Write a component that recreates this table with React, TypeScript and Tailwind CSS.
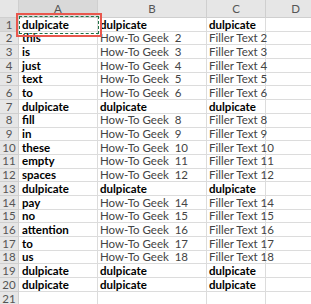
import React from "react";

const rowsA = ["dulpicate","this","is","just","text","to","dulpicate","fill","in","these","empty","spaces","dulpicate","pay","no","attention","to","us","dulpicate","dulpicate"];
const dupRows = new Set([1,7,13,19,20]);

export default function App() {
  const rows = rowsA.map((a, i) => {
    const n = i + 1;
    const dup = dupRows.has(n);
    return { n, a, b: dup ? "dulpicate" : `How-To Geek\u00a0 ${n}`, c: dup ? "dulpicate" : `Filler Text ${n}`, dup };
  });
  return (
    <div className="relative w-[311px] h-[304px] overflow-hidden bg-white text-[11.5px] text-[#262626]" style={{ fontFamily: "Lato, 'Liberation Sans', sans-serif" }}>
      <div className="grid grid-cols-[19px_79px_109px_59px_60px]">
        <div className="h-[18px] bg-[#e6e6e6] border-r border-b border-[#cfcfcf]" />
        <div className="h-[18px] bg-[#d9d9d9] border-r border-b border-[#cfcfcf] flex items-center justify-center text-[#555]">A</div>
        <div className="h-[18px] bg-[#e6e6e6] border-r border-b border-[#cfcfcf] flex items-center justify-center text-[#555]">B</div>
        <div className="h-[18px] bg-[#e6e6e6] border-r border-b border-[#cfcfcf] flex items-center justify-center text-[#555]">C</div>
        <div className="h-[18px] bg-[#e6e6e6] border-r border-b border-[#cfcfcf] flex items-center justify-center text-[#555]">D</div>
        {rows.map((r) => (
          <React.Fragment key={r.n}>
            <div className={`h-[13.7px] ${r.n === 1 ? "bg-[#d9d9d9]" : "bg-[#e6e6e6]"} border-r border-b border-[#cfcfcf] flex items-center justify-center text-[#555] leading-none`}>{r.n}</div>
            <div className="h-[13.7px] border-r border-b border-[#dcdcdc] flex items-center pl-[3px] font-bold text-black leading-none">{r.a}</div>
            <div className={`h-[13.7px] border-r border-b border-[#dcdcdc] flex items-center pl-[2px] leading-none whitespace-pre ${r.dup ? "font-bold text-black" : "text-[#444]"}`}>{r.b}</div>
            <div className={`h-[13.7px] border-r border-b border-[#dcdcdc] flex items-center pl-[2px] leading-none whitespace-pre ${r.dup ? "font-bold text-black" : "text-[#444]"}`}>{r.c}</div>
            <div className="h-[13.7px] border-r border-b border-[#dcdcdc]" />
          </React.Fragment>
        ))}
        <div className="h-[13.7px] bg-[#e6e6e6] border-r border-[#cfcfcf] flex items-center justify-center text-[#555] leading-none">21</div>
        <div className="h-[13.7px] border-r border-[#dcdcdc]" />
        <div className="h-[13.7px] border-r border-[#dcdcdc]" />
        <div className="h-[13.7px] border-r border-[#dcdcdc]" />
        <div className="h-[13.7px] border-r border-[#dcdcdc]" />
      </div>
      <div className="absolute left-[16px] top-[13px] w-[86px] h-[24px] border-[2.5px] border-[#e8574d]" />
      <div className="absolute left-[19px] top-[16px] w-[80px] h-[18px] border-[1.5px] border-dashed border-[#217346]" />
    </div>
  );
}
